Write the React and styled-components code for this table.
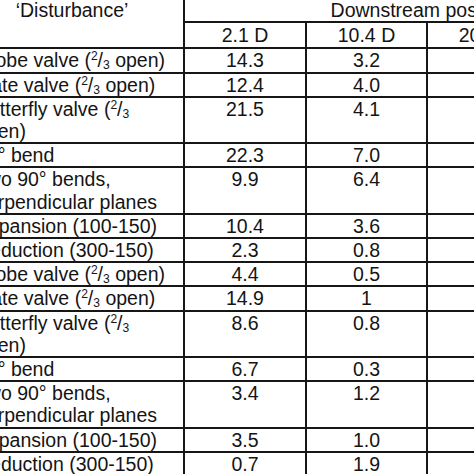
import React from 'react';
import styled, { createGlobalStyle } from 'styled-components';

const GlobalStyle = createGlobalStyle`
  html, body {
    margin: 0;
    padding: 0;
    background: #ffffff;
  }
`;

const Viewport = styled.div`
  width: 474px;
  height: 474px;
  overflow: hidden;
  background: #ffffff;
`;

const Table = styled.table`
  width: 698px;
  margin-left: -30px;
  margin-top: -3px;
  border-collapse: collapse;
  table-layout: fixed;
  font-family: "Liberation Sans", Arial, sans-serif;
  font-size: 19.5px;
  line-height: 22.2px;
  color: #141414;
`;

const Head = styled.th`
  border: 2px solid #161616;
  font-weight: normal;
  vertical-align: top;
  text-align: center;
  white-space: nowrap;
  padding: ${(p) => (p.$top ? '0 4px' : '1px 4px 1px')};
  padding-right: ${(p) => (p.$shift ? '15px' : '4px')};
`;

const Cell = styled.td`
  border: 2px solid #161616;
  vertical-align: top;
  padding: 0 4px;
  white-space: nowrap;
  text-align: ${(p) => (p.$label ? 'left' : 'center')};
`;

const Sup = styled.sup`
  font-size: 0.62em;
  line-height: 0;
  vertical-align: 0.55em;
`;

const Sub = styled.sub`
  font-size: 0.62em;
  line-height: 0;
  vertical-align: -0.15em;
`;

const TwoThirds = () => (
  <>
    <Sup>2</Sup>/<Sub>3</Sub>
  </>
);

const disturbances = [
  <>Globe valve (<TwoThirds /> open)</>,
  <>Gate valve (<TwoThirds /> open)</>,
  <>Butterfly valve (<TwoThirds /><br />open)</>,
  <>90° bend</>,
  <>Two 90° bends,<br />perpendicular planes</>,
  <>Expansion (100-150)</>,
  <>Reduction (300-150)</>,
];

const rows = [
  ['14.3', '3.2'],
  ['12.4', '4.0'],
  ['21.5', '4.1'],
  ['22.3', '7.0'],
  ['9.9', '6.4'],
  ['10.4', '3.6'],
  ['2.3', '0.8'],
  ['4.4', '0.5'],
  ['14.9', '1'],
  ['8.6', '0.8'],
  ['6.7', '0.3'],
  ['3.4', '1.2'],
  ['3.5', '1.0'],
  ['0.7', '1.9'],
];

export default function App() {
  return (
    <Viewport>
      <GlobalStyle />
      <Table>
        <colgroup>
          <col style={{ width: 213 }} />
          <col style={{ width: 122 }} />
          <col style={{ width: 121 }} />
          <col style={{ width: 121 }} />
          <col style={{ width: 121 }} />
        </colgroup>
        <thead>
          <tr>
            <Head rowSpan={2} $top $shift>‘Disturbance’</Head>
            <Head colSpan={4} $top>Downstream positions</Head>
          </tr>
          <tr>
            <Head>2.1 D</Head>
            <Head>10.4 D</Head>
            <Head>20.8 D</Head>
            <Head>31.2 D</Head>
          </tr>
        </thead>
        <tbody>
          {rows.map((r, i) => (
            <tr key={i}>
              <Cell $label>{disturbances[i % 7]}</Cell>
              <Cell>{r[0]}</Cell>
              <Cell>{r[1]}</Cell>
              <Cell />
              <Cell />
            </tr>
          ))}
        </tbody>
      </Table>
    </Viewport>
  );
}
